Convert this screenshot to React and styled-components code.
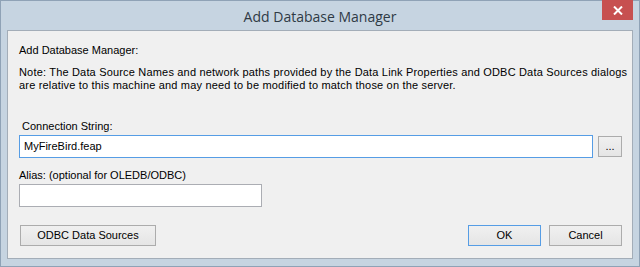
import React from "react";
import styled, { createGlobalStyle } from "styled-components";

const GlobalStyle = createGlobalStyle`
  html, body {
    margin: 0;
    padding: 0;
    background: #c6d4e1;
  }
`;

// 창 전체 프레임
const Window = styled.div`
  width: 640px;
  height: 267px;
  box-sizing: border-box;
  background: #c6d4e1;
  border: 1px solid #8fa2b6;
  display: flex;
  flex-direction: column;
  font-family: "Liberation Sans", Arial, sans-serif;
`;

const TitleBar = styled.div`
  height: 29px;
  position: relative;
  display: flex;
  align-items: center;
  justify-content: center;
`;

const Title = styled.div`
  font-family: "Open Sans", "Noto Sans", sans-serif;
  font-size: 14px;
  color: #2f3a45;
  margin-top: 1px;
`;

const CloseButton = styled.div`
  position: absolute;
  top: -1px;
  right: 6px;
  width: 31px;
  height: 20px;
  background: #c75050;
  display: flex;
  align-items: center;
  justify-content: center;
`;

const Client = styled.div`
  flex: 1;
  margin: 0 6px 7px 6px;
  border: 1px solid #a3adb8;
  background: #f0f0f0;
  padding: 0 10px 12px 11px;
  display: flex;
  flex-direction: column;
  font-size: 11px;
  line-height: 13px;
  color: #000;
`;

const Heading = styled.div`
  margin-top: 13px;
`;

const Note = styled.div`
  margin-top: 9px;
  letter-spacing: 0.18px;
  white-space: nowrap;
`;

const Label = styled.div`
  margin-top: ${(p) => p.$top}px;
  padding-left: ${(p) => p.$indent || 0}px;
`;

const FieldRow = styled.div`
  margin-top: 2px;
  display: flex;
  align-items: center;
  gap: 5px;
`;

const TextBox = styled.div`
  box-sizing: border-box;
  height: 23px;
  width: ${(p) => (p.$width ? `${p.$width}px` : "auto")};
  flex: ${(p) => (p.$width ? "none" : 1)};
  background: #fff;
  border: 1px solid ${(p) => (p.$focused ? "#569de5" : "#abadb3")};
  padding: 0 4px;
  display: flex;
  align-items: center;
`;

const ButtonRow = styled.div`
  margin-top: 18px;
  display: flex;
  align-items: center;
  padding-left: 1px;
`;

const Button = styled.div`
  box-sizing: border-box;
  width: ${(p) => p.$width}px;
  height: ${(p) => p.$height || 21}px;
  border: 1px solid ${(p) => (p.$default ? "#569de5" : "#acacac")};
  background: linear-gradient(#f0f0f0, #e5e5e5);
  display: flex;
  align-items: center;
  justify-content: center;
  margin-left: ${(p) => p.$gap || 0}px;
`;

const Spacer = styled.div`
  flex: 1;
`;

export default function App() {
  return (
    <>
      <GlobalStyle />
      <Window>
        <TitleBar>
          <Title>Add Database Manager</Title>
          <CloseButton>
            <svg width="10" height="9" viewBox="0 0 10 9">
              <path d="M1 0.5 L9 8.5 M9 0.5 L1 8.5" stroke="#fff" strokeWidth="2" />
            </svg>
          </CloseButton>
        </TitleBar>
        <Client>
          <Heading>Add Database Manager:</Heading>
          <Note>
            Note: The Data Source Names and network paths provided by the Data Link Properties and ODBC Data Sources dialogs
            <br />
            are relative to this machine and may need to be modified to match those on the server.
          </Note>
          <Label $top={28} $indent={3}>Connection String:</Label>
          <FieldRow>
            <TextBox $focused>MyFireBird.feap</TextBox>
            <Button $width={24} $height={21}>...</Button>
          </FieldRow>
          <Label $top={11}>Alias: (optional for OLEDB/ODBC)</Label>
          <FieldRow>
            <TextBox $width={243} />
          </FieldRow>
          <ButtonRow>
            <Button $width={136}>ODBC Data Sources</Button>
            <Spacer />
            <Button $width={73} $default>OK</Button>
            <Button $width={73} $gap={8}>Cancel</Button>
          </ButtonRow>
        </Client>
      </Window>
    </>
  );
}
